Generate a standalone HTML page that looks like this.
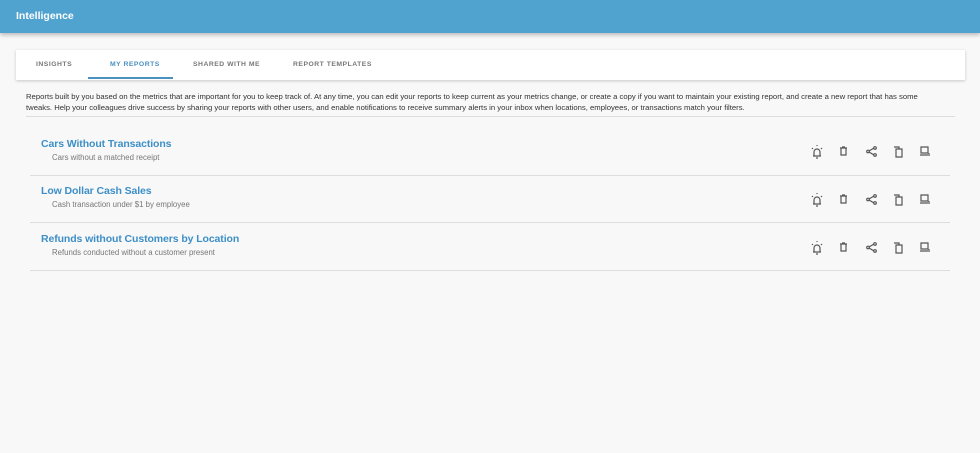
<!DOCTYPE html>
<html><head><style>
*{margin:0;padding:0;box-sizing:border-box}
body{width:980px;height:453px;background:#f8f8f8;font-family:"Liberation Sans",sans-serif;position:relative;overflow:hidden}
.hdr{position:absolute;left:0;top:0;width:980px;height:33px;background:#50a3cf;box-shadow:0 2px 4px rgba(0,0,0,.25)}
.hdr span{position:absolute;left:16px;top:10px;color:#fff;font-size:10.5px;font-weight:bold}
.tabs{position:absolute;left:16px;top:50px;width:949px;height:30px;background:#fff;box-shadow:0 1px 3px rgba(0,0,0,.2)}
.tab{position:absolute;top:11px;font-size:6.8px;color:#777;letter-spacing:.5px;font-weight:bold}
.tab.a{color:#4a90c0}
.ul{position:absolute;left:88px;top:77px;width:85px;height:2px;background:#4a90c0}
.desc{position:absolute;left:26px;top:91px;width:950px;font-size:7.7px;line-height:11px;color:#333;white-space:nowrap}
.hl{position:absolute;left:26px;top:116px;width:929px;height:1px;background:#ddd}
.row{position:absolute;left:30px;width:920px;height:48px;border-bottom:1px solid #ddd}
.t{position:absolute;left:11px;top:10px;font-size:10.5px;color:#3d8fc7;font-weight:bold;letter-spacing:-.1px}
.s{position:absolute;left:22px;top:25px;font-size:7.8px;color:#777}
</style></head><body>
<div class="hdr"><span>Intelligence</span></div>
<div class="tabs">
<div class="tab" style="left:20px">INSIGHTS</div>
<div class="tab a" style="left:94px">MY REPORTS</div>
<div class="tab" style="left:177px">SHARED WITH ME</div>
<div class="tab" style="left:277px">REPORT TEMPLATES</div>
</div>
<div class="ul"></div>
<div class="desc">Reports built by you based on the metrics that are important for you to keep track of. At any time, you can edit your reports to keep current as your metrics change, or create a copy if you want to maintain your existing report, and create a new report that has some<br>tweaks. Help your colleagues drive success by sharing your reports with other users, and enable notifications to receive summary alerts in your inbox when locations, employees, or transactions match your filters.</div>
<div class="hl"></div>

<div class="row" style="top:128px"><div class="t">Cars Without Transactions</div><div class="s">Cars without a matched receipt</div></div>
<div class="row" style="top:175px"><div class="t">Low Dollar Cash Sales</div><div class="s">Cash transaction under $1 by employee</div></div>
<div class="row" style="top:223px"><div class="t">Refunds without Customers by Location</div><div class="s">Refunds conducted without a customer present</div></div>

<svg width="980" height="453" style="position:absolute;left:0;top:0" fill="none" stroke="#555" stroke-width="1.2">
<defs><g id="ic">
<path d="M813 156h8M814 156v-4a3 3 0 0 1 6 0v4M816 158h2M812 148l1 1M822 148l-1 1M817 145v1"/>
<path d="M840 148h7M842 147h3M841 148v7h5v-7"/>
<circle cx="875" cy="148" r="1.3"/><circle cx="868" cy="151.5" r="1.3"/><circle cx="875" cy="155" r="1.3"/><path d="M869 151l5-3M869 152l5 3"/>
<path d="M894 147h5v2M896 149h6v8h-6z"/>
<path d="M921 147h7v6h-7zM920 155h6M926 155h2M929 153v3"/>
</g></defs>
<use href="#ic"/><use href="#ic" y="48"/><use href="#ic" y="96"/>
</svg>
</body></html>
